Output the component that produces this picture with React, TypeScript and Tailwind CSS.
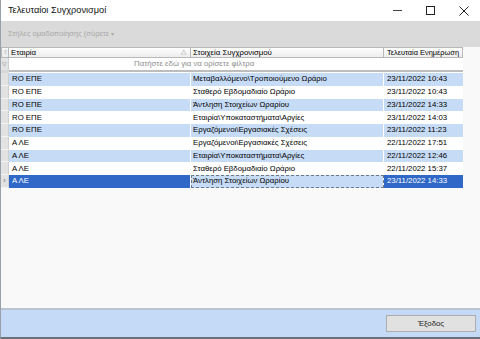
import React from "react";

const rows: [string, string, string][] = [
  ["RO ΕΠΕ", "Μεταβαλλόμενο\\Τροποιούμενο Ωράριο", "23/11/2022 10:43"],
  ["RO ΕΠΕ", "Σταθερό Εβδομαδιαίο Ωράριο", "23/11/2022 10:43"],
  ["RO ΕΠΕ", "Άντληση Στοιχείων Ωραρίου", "23/11/2022 14:33"],
  ["RO ΕΠΕ", "Εταιρία\\Υποκαταστήματα\\Αργίες", "23/11/2022 14:03"],
  ["RO ΕΠΕ", "Εργαζόμενοι\\Εργασιακές Σχέσεις", "23/11/2022 11:23"],
  ["Α ΛΕ", "Εργαζόμενοι\\Εργασιακές Σχέσεις", "22/11/2022 17:51"],
  ["Α ΛΕ", "Εταιρία\\Υποκαταστήματα\\Αργίες", "22/11/2022 12:46"],
  ["Α ΛΕ", "Σταθερό Εβδομαδιαίο Ωράριο", "22/11/2022 15:37"],
  ["Α ΛΕ", "Άντληση Στοιχείων Ωραρίου", "23/11/2022 14:33"],
];

export default function App() {
  return (
    <div
      className="w-[480px] h-[339px] bg-white flex flex-col overflow-hidden border-l border-[#9aa0a8] border-b-2 border-b-[#6b7079] text-black"
      style={{ fontFamily: '"Liberation Sans", Arial, sans-serif' }}
    >
      {/* Title bar */}
      <div className="h-[21px] shrink-0 flex items-center bg-white">
        <div className="pl-[7px] text-[9.2px] text-[#111] flex-1">Τελευταίοι Συγχρονισμοί</div>
        <div className="flex items-center h-full">
          <div className="w-[33px] h-full flex items-center justify-center">
            <div className="w-[9px] h-px bg-[#444]" />
          </div>
          <div className="w-[33px] h-full flex items-center justify-center">
            <div className="w-[9px] h-[9px] border border-[#222]" />
          </div>
          <div className="w-[33px] h-full flex items-center justify-center">
            <svg width="10" height="10" viewBox="0 0 10 10">
              <path d="M0.5 0.5 L9.5 9.5 M9.5 0.5 L0.5 9.5" stroke="#222" strokeWidth="1" />
            </svg>
          </div>
        </div>
      </div>

      {/* Group panel */}
      <div className="h-[26px] shrink-0 bg-[#dadada] flex items-center pl-[7px] text-[7.6px] text-[#a8a8a8]">
        Στήλες ομαδοποίησης (σύρετε <span className="ml-[2px] text-[6px]">▾</span>
      </div>

      {/* Grid */}
      <div className="flex-1 min-h-0 bg-[#f9f9f9] flex text-[7.8px] whitespace-nowrap">
        <div className="w-[462px] shrink-0 flex flex-col">
          {/* Header row */}
          <div className="h-[11px] grid grid-cols-[8px_182px_193px_79px]">
            <div className="border border-[#b8b8b8] bg-gradient-to-b from-[#fbfbfb] to-[#ececec] flex items-center justify-center text-[6px] text-[#aaa]">
              ⁜
            </div>
            <div className="border-y border-r border-[#b8b8b8] bg-gradient-to-b from-[#fdfdfd] to-[#ededed] flex items-center pl-[2px] justify-between pr-[4px] leading-none">
              <span>Εταιρία</span>
              <span className="text-[6.5px] text-[#999]">△</span>
            </div>
            <div className="border-y border-r border-[#b8b8b8] bg-gradient-to-b from-[#fdfdfd] to-[#ededed] flex items-center pl-[2px] leading-none">
              Στοιχεία Συγχρονισμού
            </div>
            <div className="overflow-hidden border-y border-r border-[#b8b8b8] bg-gradient-to-b from-[#fdfdfd] to-[#ededed] flex items-center pl-[3px] leading-none text-[7.4px]">
              Τελευταία Ενημέρωση
            </div>
          </div>

          {/* Filter row */}
          <div className="h-[12px] grid grid-cols-[8px_454px]">
            <div className="bg-[#e4e4e4] border-r border-[#cfcfcf] flex items-center justify-center text-[6px] text-[#8a8a8a]">
              ▽
            </div>
            <div className="bg-white flex items-center pl-[125px] text-[#8c8c8c]">
              Πατήστε εδώ για να ορίσετε φίλτρα
            </div>
          </div>

          {/* Separator */}
          <div className="h-[3px] grid grid-cols-[8px_454px]">
            <div className="bg-[#d8d8d8]" />
            <div className="bg-white border-t-2 border-[#bdbdbd]" />
          </div>

          {/* Data rows */}
          {rows.map((r, i) => {
            const blue = i % 2 === 0;
            const selected = i === rows.length - 1;
            const bg = blue ? "bg-[#c6dbf6]" : "bg-white";
            return (
              <div key={i} className="h-[12.75px] grid grid-cols-[8px_182px_193px_79px]">
                <div className="bg-[#e2e2e2] border-b border-[#f4f4f4] border-r border-r-[#cfcfcf] flex items-center justify-center text-[7px] text-[#666] leading-none">
                  {selected ? "›" : ""}
                </div>
                <div
                  className={`overflow-hidden flex items-center pl-[3px] border-r border-white leading-none ${
                    selected ? "bg-[#2f68c6] text-white" : bg
                  }`}
                >
                  {r[0]}
                </div>
                <div
                  className={`overflow-hidden flex items-center pl-[2px] border-r border-white leading-none ${
                    selected
                      ? "bg-[#c6dbf6] outline-1 outline-dashed outline-[#6d7a8c] -outline-offset-1"
                      : bg
                  }`}
                >
                  {r[1]}
                </div>
                <div
                  className={`overflow-hidden flex items-center pl-[3px] leading-none ${
                    selected ? "bg-[#2f68c6] text-white" : bg
                  }`}
                >
                  {r[2]}
                </div>
              </div>
            );
          })}
        </div>
        <div className="flex-1 bg-[#f9f9f9]" />
      </div>

      {/* Bottom panel */}
      <div className="h-[29px] shrink-0 bg-[#c5daf7] border-t-2 border-[#b8c4d2] flex items-center justify-end pr-[4px]">
        <button className="w-[90px] h-[17px] bg-[#e1e1e1] border border-[#adadad] text-[7.8px] text-[#222] flex items-center justify-center">
          Έξοδος
        </button>
      </div>
    </div>
  );
}
